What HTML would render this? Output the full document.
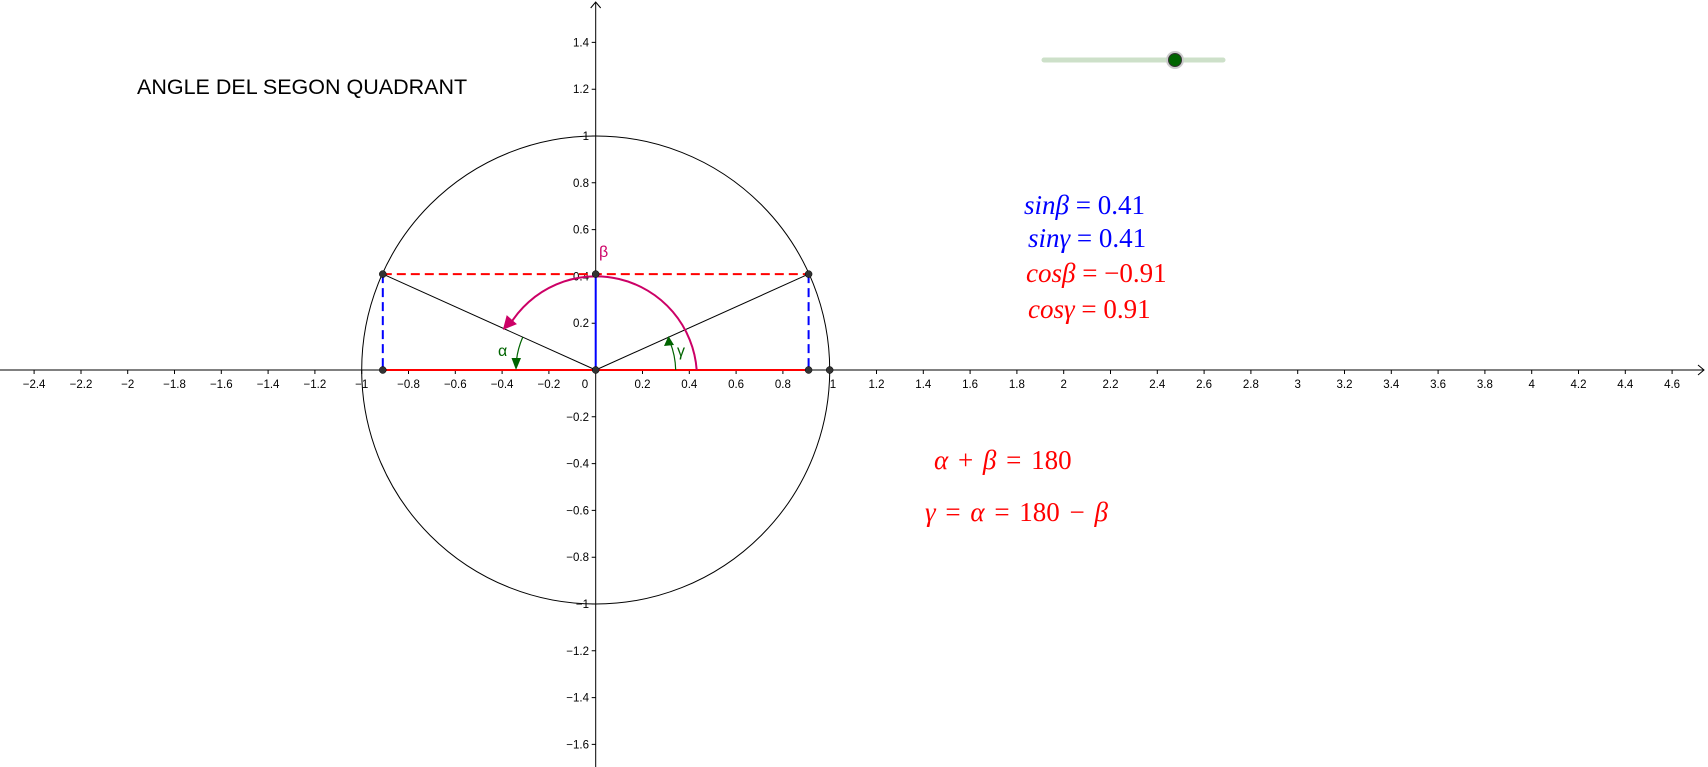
<!DOCTYPE html>
<html><head><meta charset="utf-8"><style>
html,body{margin:0;padding:0;background:#fff;width:1708px;height:767px;overflow:hidden}
svg{display:block}
.xl{font:11.5px "Liberation Sans",sans-serif;fill:#000;text-anchor:middle}
.yl{font:11.5px "Liberation Sans",sans-serif;fill:#000;text-anchor:end}
.f{font-family:"Liberation Serif",serif;font-size:27px}
.i{font-style:italic}
</style></head><body>
<svg width="1708" height="767" viewBox="0 0 1708 767" xmlns="http://www.w3.org/2000/svg">
<line x1="0" y1="370" x2="1704" y2="370" stroke="#000" stroke-width="1"/>
<path d="M1698 365 L1704 370 L1698 375" fill="none" stroke="#000"/>
<line x1="595.7" y1="767" x2="595.7" y2="2" stroke="#000"/>
<path d="M590.7 8 L595.7 2 L600.7 8" fill="none" stroke="#000"/>
<g stroke="#000">
<path d="M34.1 370v4M81 370v4M127.7 370v4M174.5 370v4M221.3 370v4M268.1 370v4M314.9 370v4M361.7 370v4M408.5 370v4M455.3 370v4M502.1 370v4M548.9 370v4M642.5 370v4M689.3 370v4M736.1 370v4M782.9 370v4M829.7 370v4M876.5 370v4M923.3 370v4M970.1 370v4M1016.9 370v4M1063.7 370v4M1110.5 370v4M1157.3 370v4M1204.1 370v4M1250.9 370v4M1297.7 370v4M1344.5 370v4M1391.3 370v4M1438.1 370v4M1484.9 370v4M1531.7 370v4M1578.5 370v4M1625.3 370v4M1672.1 370v4"/>
<path d="M595.7 42.4h-4M595.7 89.2h-4M595.7 136h-4M595.7 182.8h-4M595.7 229.6h-4M595.7 276.4h-4M595.7 323.2h-4M595.7 416.8h-4M595.7 463.6h-4M595.7 510.4h-4M595.7 557.2h-4M595.7 604h-4M595.7 650.8h-4M595.7 697.6h-4M595.7 744.4h-4"/>
</g>
<g class="xl">
<text x="34.1" y="388">−2.4</text><text x="81" y="388">−2.2</text><text x="127.7" y="388">−2</text><text x="174.5" y="388">−1.8</text><text x="221.3" y="388">−1.6</text><text x="268.1" y="388">−1.4</text><text x="314.9" y="388">−1.2</text><text x="361.7" y="388">−1</text><text x="408.5" y="388">−0.8</text><text x="455.3" y="388">−0.6</text><text x="502.1" y="388">−0.4</text><text x="548.9" y="388">−0.2</text><text x="585" y="388">0</text><text x="642.5" y="388">0.2</text><text x="689.3" y="388">0.4</text><text x="736.1" y="388">0.6</text><text x="782.9" y="388">0.8</text><text x="833" y="388">1</text><text x="876.5" y="388">1.2</text><text x="923.3" y="388">1.4</text><text x="970.1" y="388">1.6</text><text x="1016.9" y="388">1.8</text><text x="1063.7" y="388">2</text><text x="1110.5" y="388">2.2</text><text x="1157.3" y="388">2.4</text><text x="1204.1" y="388">2.6</text><text x="1250.9" y="388">2.8</text><text x="1297.7" y="388">3</text><text x="1344.5" y="388">3.2</text><text x="1391.3" y="388">3.4</text><text x="1438.1" y="388">3.6</text><text x="1484.9" y="388">3.8</text><text x="1531.7" y="388">4</text><text x="1578.5" y="388">4.2</text><text x="1625.3" y="388">4.4</text><text x="1672.1" y="388">4.6</text>
</g>
<g class="yl">
<text x="589" y="46.4">1.4</text><text x="589" y="93.2">1.2</text><text x="589" y="140">1</text><text x="589" y="186.8">0.8</text><text x="589" y="233.6">0.6</text><text x="589" y="280.4">0.4</text><text x="589" y="327.2">0.2</text><text x="589" y="420.8">−0.2</text><text x="589" y="467.6">−0.4</text><text x="589" y="514.4">−0.6</text><text x="589" y="561.2">−0.8</text><text x="589" y="608">−1</text><text x="589" y="654.8">−1.2</text><text x="589" y="701.6">−1.4</text><text x="589" y="748.4">−1.6</text>
</g>
<circle cx="595.7" cy="370" r="234" fill="none" stroke="#000" stroke-width="1"/>
<line x1="382.8" y1="370" x2="808.6" y2="370" stroke="#f00" stroke-width="2"/>
<line x1="382.8" y1="274.1" x2="808.6" y2="274.1" stroke="#f00" stroke-width="2" stroke-dasharray="9,5"/>
<line x1="382.8" y1="274.1" x2="382.8" y2="370" stroke="#00f" stroke-width="2" stroke-dasharray="9,5"/>
<line x1="808.6" y1="274.1" x2="808.6" y2="370" stroke="#00f" stroke-width="2" stroke-dasharray="9,5"/>
<line x1="595.7" y1="274.1" x2="595.7" y2="370" stroke="#00f" stroke-width="2"/>
<line x1="595.7" y1="370" x2="382.8" y2="274.1" stroke="#000"/>
<line x1="595.7" y1="370" x2="808.6" y2="274.1" stroke="#000"/>
<path d="M696.7 370 A101 101 0 0 0 509 326" fill="none" stroke="#cc0066" stroke-width="2"/>
<path d="M503.6 329 L507 316 L516 324 Z" fill="#cc0066" stroke="#cc0066"/>
<text x="599" y="257" font-family="Liberation Sans,sans-serif" font-size="16" fill="#cc0066">β</text>
<path d="M522.7 337.2 A80 80 0 0 0 516.5 360" fill="none" stroke="#006400" stroke-width="1.2"/>
<path d="M511.5 358 L521 358 L516 370 Z" fill="#006400"/>
<text x="498" y="356" font-family="Liberation Sans,sans-serif" font-size="16" fill="#006400">α</text>
<path d="M675.7 370 A80 80 0 0 0 670 342" fill="none" stroke="#006400" stroke-width="1.2"/>
<path d="M664 346 L668.5 336 L674 345 Z" fill="#006400"/>
<text x="677" y="356" font-family="Liberation Sans,sans-serif" font-size="16" fill="#006400">γ</text>
<g fill="#333" stroke="#000" stroke-width="0.5">
<circle cx="382.8" cy="274.1" r="3.5"/><circle cx="808.6" cy="274.1" r="3.5"/><circle cx="595.7" cy="274.1" r="3.5"/>
<circle cx="382.8" cy="370" r="3.5"/><circle cx="808.6" cy="370" r="3.5"/><circle cx="829.7" cy="370" r="3.5"/><circle cx="595.7" cy="370" r="3.5"/>
</g>
<text x="137" y="94" font-family="Liberation Sans,sans-serif" font-size="21.5" fill="#000">ANGLE DEL SEGON QUADRANT</text>
<line x1="1044" y1="60" x2="1223" y2="60" stroke="#cde0c9" stroke-width="5" stroke-linecap="round"/>
<circle cx="1175" cy="60" r="9" fill="#ccc"/>
<circle cx="1175" cy="60" r="6.5" fill="#006400" stroke="#333" stroke-width="1"/>
<text class="f" x="1024" y="214" fill="#00f"><tspan class="i">sinβ</tspan> = 0.41</text>
<text class="f" x="1028" y="247" fill="#00f"><tspan class="i">sinγ</tspan> = 0.41</text>
<text class="f" x="1026" y="282" fill="#f00"><tspan class="i">cosβ</tspan> = −0.91</text>
<text class="f" x="1028" y="318" fill="#f00"><tspan class="i">cosγ</tspan> = 0.91</text>
<text class="f" x="934" y="469" fill="#f00" word-spacing="3"><tspan class="i">α</tspan> + <tspan class="i">β</tspan> = 180</text>
<text class="f" x="925" y="521" fill="#f00" word-spacing="3"><tspan class="i">γ</tspan> = <tspan class="i">α</tspan> = 180 − <tspan class="i">β</tspan></text>
</svg>
</body></html>
